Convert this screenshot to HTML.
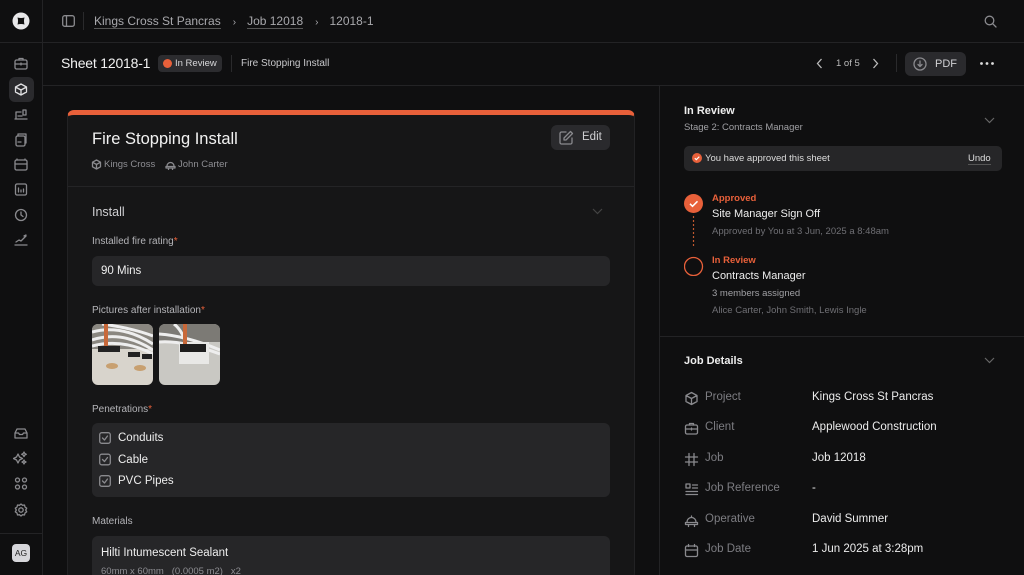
<!DOCTYPE html>
<html style="width:1024px;height:575px;overflow:hidden"><head><meta charset="utf-8"><style>
*{box-sizing:border-box;margin:0;padding:0}
body{width:1024px;height:575px;overflow:hidden;background:#0f0f10;font-family:"Liberation Sans",sans-serif;color:#ececec;position:relative}
.a{position:absolute}
.ic{stroke:#8a8a8e;fill:none;stroke-width:1.3;stroke-linecap:round;stroke-linejoin:round}
.muted{color:#8e8e93}
.lbl{font-size:10px;color:#b4b4b8}
.req{color:#e8603a}
.row{position:absolute;left:684px;font-size:11.5px}
.row .k{position:absolute;left:21px;color:#7d7d82;white-space:nowrap}
.row .v{position:absolute;left:128px;color:#ececec;white-space:nowrap}
.row svg{position:absolute;left:0;top:0}
</style></head><body>
<!-- sidebar -->
<div class="a" style="left:42px;top:0;width:1px;height:575px;background:#232325"></div>
<div class="a" style="left:0;top:42px;width:1024px;height:1px;background:#232325"></div>
<div class="a" style="left:0;top:533px;width:42px;height:1px;background:#232325"></div>
<div class="a" style="left:43px;top:85px;width:981px;height:1px;background:#232325"></div>
<svg class="a" style="left:12px;top:12px" width="18" height="18" viewBox="0 0 18 18"><circle cx="9" cy="9" r="8.5" fill="#e8e8ea"/><path d="M5.5 5.5Q9 6.5 12.5 5.5Q11.5 9 12.5 12.5Q9 11.5 5.5 12.5Q6.5 9 5.5 5.5Z" fill="#111"/></svg>
<div class="a" style="left:9px;top:77px;width:25px;height:25px;border-radius:6px;background:#2a2a2d"></div>
<svg class="a" style="left:13px;top:56px" width="16" height="200" viewBox="0 0 16 200">
<g class="ic">
<rect x="2" y="4" width="12" height="9" rx="1.5"/><path d="M6 4V2.5h4V4M2 8h12M8 7v2"/>
<path d="M8 28l5.5 3v5L8 39l-5.5-3v-5zM2.5 31L8 34l5.5-3M8 34v5" stroke="#e0e0e2"/>
<path d="M2 63h12M3 63v-7h5M10 54h3v5h-3zM5 60h4"/>
<rect x="3" y="80" width="9" height="10" rx="1.5"/><path d="M5 80v-2h8v9h-1M5 86h3"/>
<rect x="2" y="104" width="12" height="10" rx="1.5"/><path d="M2 108h12M4 104v-1M12 104v-1"/>
<rect x="2.5" y="128" width="11" height="11" rx="1.5"/><path d="M5.5 136v-4M8 136v-2M10.5 136v-3"/>
<circle cx="8" cy="159" r="5.5"/><path d="M8 156v3l2 1.5"/>
<path d="M2 189h12M3 186l3-2 2 1 5-5M11 180l2-1"/>
</g></svg>
<svg class="a" style="left:13px;top:427px" width="16" height="92" viewBox="0 0 16 92">
<g class="ic">
<path d="M2 6l2-4h8l2 4v5H2zM2 6h3.5l1 1.5h3L10.5 6H14"/>
<path d="M5 27l1.5 3 3 1.5-3 1.5L5 36l-1.5-3L.5 31.5l3-1.5zM11 25l.8 1.5 1.5.8-1.5.8-.8 1.5-.8-1.5-1.5-.8 1.5-.8zM11 33l.7 1.3 1.3.7-1.3.7-.7 1.3-.7-1.3-1.3-.7 1.3-.7z"/>
<circle cx="4.5" cy="53" r="2"/><circle cx="11.5" cy="53" r="2"/><circle cx="4.5" cy="60" r="2"/><circle cx="11.5" cy="60" r="2"/>
<circle cx="8" cy="83" r="2.2"/><path d="M8 77l1.5 1.3 2-.3.5 2 1.7 1.2-1 1.8 1 1.8-1.7 1.2-.5 2-2-.3L8 89l-1.5-1.3-2 .3-.5-2-1.7-1.2 1-1.8-1-1.8L4 80l.5-2 2 .3z"/>
</g></svg>
<div class="a" style="left:12px;top:544px;width:18px;height:18px;border-radius:4px;background:#d6d6da;color:#222;font-size:8.5px;line-height:18px;text-align:center">AG</div>

<!-- top bar -->
<svg class="a" style="left:62px;top:15px" width="13" height="12" viewBox="0 0 13 12"><g class="ic"><rect x=".7" y=".7" width="11.6" height="10.6" rx="2"/><path d="M4.5 1v10"/></g></svg>
<div class="a" style="left:83px;top:12px;width:1px;height:18px;background:#2a2a2c"></div>
<div class="a" style="left:94px;top:14px;font-size:12px;color:#a9a9ad;white-space:nowrap"><span style="border-bottom:1px solid #555">Kings Cross St Pancras</span><span style="margin:0 11px 0 12px;font-size:10px">›</span><span style="border-bottom:1px solid #555">Job 12018</span><span style="margin:0 11px 0 12px;font-size:10px">›</span>12018-1</div>
<svg class="a" style="left:984px;top:15px" width="13" height="13" viewBox="0 0 13 13"><g class="ic"><circle cx="5.5" cy="5.5" r="4.3"/><path d="M8.7 8.7L12 12"/></g></svg>

<!-- header -->
<div class="a" style="left:61px;top:55px;font-size:14px;color:#f2f2f2;letter-spacing:-0.2px">Sheet 12018-1</div>
<div class="a" style="left:158px;top:55px;width:64px;height:17px;border-radius:4px;background:#2c2c2f;font-size:9.5px;color:#d8d8da;line-height:17px;padding-left:17px">In Review</div>
<div class="a" style="left:163px;top:59px;width:9px;height:9px;border-radius:50%;background:#e8603a"></div>
<div class="a" style="left:231px;top:55px;width:1px;height:17px;background:#2a2a2c"></div>
<div class="a" style="left:241px;top:58px;font-size:10px;color:#c8c8cb">Fire Stopping Install</div>
<svg class="a" style="left:816px;top:58px" width="7" height="11" viewBox="0 0 7 11"><path d="M5.5 1L1.5 5.5 5.5 10" stroke="#bbb" fill="none" stroke-width="1.3"/></svg>
<div class="a" style="left:836px;top:58px;font-size:9.5px;color:#bbb">1 of 5</div>
<svg class="a" style="left:872px;top:58px" width="7" height="11" viewBox="0 0 7 11"><path d="M1.5 1l4 4.5-4 4.5" stroke="#bbb" fill="none" stroke-width="1.3"/></svg>
<div class="a" style="left:896px;top:54px;width:1px;height:18px;background:#2a2a2c"></div>
<div class="a" style="left:905px;top:52px;width:61px;height:24px;border-radius:6px;background:#2a2a2d;font-size:11px;color:#d0d0d3;line-height:24px;padding-left:30px">PDF</div>
<svg class="a" style="left:913px;top:57px" width="14" height="14" viewBox="0 0 14 14"><g class="ic" stroke="#c8c8cb"><circle cx="7" cy="7" r="6"/><path d="M7 4v5M5 7.5l2 2 2-2"/></g></svg>
<svg class="a" style="left:980px;top:62px" width="14" height="3" viewBox="0 0 14 3"><circle cx="1.5" cy="1.5" r="1.4" fill="#ddd"/><circle cx="7" cy="1.5" r="1.4" fill="#ddd"/><circle cx="12.5" cy="1.5" r="1.4" fill="#ddd"/></svg>

<!-- card -->
<div class="a" style="left:67px;top:110px;width:568px;height:470px;border-radius:7px;background:#161617;border:1px solid #222224;border-top:5px solid #e8603a"></div>
<div class="a" style="left:92px;top:130px;font-size:16.5px;color:#f2f2f2">Fire Stopping Install</div>
<div class="a" style="left:551px;top:125px;width:59px;height:25px;border-radius:6px;background:#2a2a2d"></div>
<div class="a" style="left:582px;top:131px;font-size:11.5px;color:#d0d0d3">Edit</div>
<svg class="a" style="left:559px;top:130px" width="15" height="15" viewBox="0 0 15 15"><g class="ic" stroke="#c8c8cb"><path d="M7 2H2.5A1.5 1.5 0 0 0 1 3.5v9A1.5 1.5 0 0 0 2.5 14h9a1.5 1.5 0 0 0 1.5-1.5V8"/><path d="M11.5 1.5l2 2L7 10H5V8z"/></g></svg>
<svg class="a" style="left:91px;top:159px" width="11" height="11" viewBox="0 0 11 11"><path class="ic" d="M5.5 1l4 2.2v4.6l-4 2.2-4-2.2V3.2zM1.5 3.2l4 2.3 4-2.3M5.5 5.5V10"/></svg>
<div class="a muted" style="left:104px;top:159px;font-size:9.5px">Kings Cross</div>
<svg class="a" style="left:165px;top:159px" width="11" height="11" viewBox="0 0 11 11"><path class="ic" d="M2 7a3.5 3.5 0 0 1 7 0M1 7.5h9v1.5H1zM3.5 9.5v1M7.5 9.5v1"/></svg>
<div class="a muted" style="left:178px;top:159px;font-size:9.5px">John Carter</div>
<div class="a" style="left:68px;top:186px;width:566px;height:1px;background:#242426"></div>
<div class="a" style="left:92px;top:205px;font-size:12.5px;color:#cfcfd2">Install</div>
<svg class="a" style="left:592px;top:208px" width="11" height="7" viewBox="0 0 11 7"><path d="M1 1l4.5 4.5L10 1" stroke="#444" fill="none" stroke-width="1.2"/></svg>
<div class="a lbl" style="left:92px;top:236px">Installed fire rating<span class="req">*</span></div>
<div class="a" style="left:92px;top:256px;width:518px;height:30px;border-radius:6px;background:#262628;font-size:11.5px;color:#eee;line-height:30px;padding-left:9px">90 Mins</div>
<div class="a lbl" style="left:92px;top:305px">Pictures after installation<span class="req">*</span></div>
<svg class="a" style="left:92px;top:324px" width="129" height="62" viewBox="0 0 129 62">
<defs><clipPath id="c1"><rect x="0" y="0" width="61" height="61" rx="6"/></clipPath><clipPath id="c2"><rect x="67" y="0" width="61" height="61" rx="6"/></clipPath></defs>
<g clip-path="url(#c1)"><rect width="61" height="61" fill="#d8d4cc"/><rect y="0" width="61" height="25" fill="#8a8780"/><path d="M0 8Q30 0 61 20M0 16Q30 6 61 26M0 22Q30 14 61 30M10 0Q40 4 61 12" stroke="#eee" stroke-width="3" fill="none"/><rect x="12" y="0" width="4" height="24" fill="#c8693a"/><rect x="6" y="22" width="22" height="6" fill="#222"/><rect x="36" y="28" width="12" height="5" fill="#222"/><rect x="50" y="30" width="10" height="5" fill="#222"/><ellipse cx="20" cy="42" rx="6" ry="3" fill="#c8a070"/><ellipse cx="48" cy="44" rx="6" ry="3" fill="#c8a070"/></g>
<g clip-path="url(#c2)"><rect x="67" width="61" height="61" fill="#c9c8c3"/><rect x="67" width="61" height="18" fill="#7c7a75"/><path d="M67 10Q95 12 128 26M82 0Q90 6 94 20M67 18Q90 16 128 30" stroke="#eee" stroke-width="3" fill="none"/><rect x="87" y="18" width="30" height="22" fill="#e8e8e6"/><rect x="88" y="20" width="26" height="8" fill="#1d1d1d"/><rect x="91" y="0" width="4" height="20" fill="#c8693a"/></g>
</svg>
<div class="a lbl" style="left:92px;top:404px">Penetrations<span class="req">*</span></div>
<div class="a" style="left:92px;top:423px;width:518px;height:74px;border-radius:6px;background:#262628"></div>
<svg class="a" style="left:99px;top:432px" width="12" height="56" viewBox="0 0 12 56"><g class="ic" stroke="#b0b0b4"><rect x=".7" y=".7" width="10.6" height="10.6" rx="2"/><path d="M3.5 6l2 2 3-4"/><rect x=".7" y="22.2" width="10.6" height="10.6" rx="2"/><path d="M3.5 27.5l2 2 3-4"/><rect x=".7" y="43.7" width="10.6" height="10.6" rx="2"/><path d="M3.5 49l2 2 3-4"/></g></svg>
<div class="a" style="left:118px;top:428px;font-size:11.5px;color:#eee;line-height:21.5px">Conduits<br>Cable<br>PVC Pipes</div>
<div class="a lbl" style="left:92px;top:516px">Materials</div>
<div class="a" style="left:92px;top:536px;width:518px;height:50px;border-radius:6px;background:#262628"></div>
<div class="a" style="left:101px;top:547px;font-size:11.5px;color:#eee">Hilti Intumescent Sealant</div>
<div class="a muted" style="left:101px;top:566px;font-size:9.5px;white-space:pre">60mm x 60mm   (0.0005 m2)   x2</div>

<!-- right panel -->
<div class="a" style="left:659px;top:86px;width:1px;height:489px;background:#232325"></div>
<div class="a" style="left:660px;top:336px;width:364px;height:1px;background:#232325"></div>
<div class="a" style="left:684px;top:105px;font-size:11px;font-weight:bold;color:#eee">In Review</div>
<div class="a" style="left:684px;top:122px;font-size:9.5px;color:#a0a0a4">Stage 2: Contracts Manager</div>
<svg class="a" style="left:984px;top:117px" width="11" height="7" viewBox="0 0 11 7"><path d="M1 1l4.5 4.5L10 1" stroke="#666" fill="none" stroke-width="1.2"/></svg>
<div class="a" style="left:684px;top:146px;width:318px;height:25px;border-radius:5px;background:#262628"></div>
<svg class="a" style="left:692px;top:153px" width="10" height="10" viewBox="0 0 10 10"><circle cx="5" cy="5" r="5" fill="#e8603a"/><path d="M2.8 5.2l1.5 1.5 3-3" stroke="#fff" fill="none" stroke-width="1.1"/></svg>
<div class="a" style="left:705px;top:153px;font-size:9.5px;color:#ddd">You have approved this sheet</div>
<div class="a" style="left:968px;top:153px;font-size:9.5px;color:#ddd;border-bottom:1px solid #555">Undo</div>
<svg class="a" style="left:684px;top:194px" width="20" height="82" viewBox="0 0 20 82"><circle cx="9.5" cy="9.5" r="9.5" fill="#e8603a"/><path d="M6 9.8l2.5 2.5 5-5" stroke="#fff" fill="none" stroke-width="1.5"/><path d="M9.5 22v32" stroke="#c0582f" stroke-width="1.2" stroke-dasharray="2 2"/><circle cx="9.5" cy="72.5" r="9" fill="none" stroke="#e8603a" stroke-width="1.3"/></svg>
<div class="a" style="left:712px;top:193px;font-size:9.5px;font-weight:bold;color:#e8603a">Approved</div>
<div class="a" style="left:712px;top:208px;font-size:11px;color:#eee">Site Manager Sign Off</div>
<div class="a" style="left:712px;top:226px;font-size:9.5px;color:#6f6f74">Approved by You at 3 Jun, 2025 a 8:48am</div>
<div class="a" style="left:712px;top:255px;font-size:9.5px;font-weight:bold;color:#e8603a">In Review</div>
<div class="a" style="left:712px;top:270px;font-size:11px;color:#eee">Contracts Manager</div>
<div class="a" style="left:712px;top:288px;font-size:9.5px;color:#a0a0a4">3 members assigned</div>
<div class="a" style="left:712px;top:305px;font-size:9.5px;color:#6f6f74">Alice Carter, John Smith, Lewis Ingle</div>

<div class="a" style="left:684px;top:355px;font-size:11px;font-weight:bold;color:#eee">Job Details</div>
<svg class="a" style="left:984px;top:357px" width="11" height="7" viewBox="0 0 11 7"><path d="M1 1l4.5 4.5L10 1" stroke="#666" fill="none" stroke-width="1.2"/></svg>
<div class="row" style="top:391px"><svg width="15" height="15" viewBox="0 0 15 15"><path class="ic" d="M7.5 1.5l5.5 3v6l-5.5 3-5.5-3v-6zM2 4.5l5.5 3 5.5-3M7.5 7.5v6"/></svg><span class="k">Project</span><span class="v">Kings Cross St Pancras</span></div>
<div class="row" style="top:421px"><svg width="15" height="15" viewBox="0 0 15 15"><g class="ic"><rect x="1.5" y="4" width="12" height="9" rx="1.5"/><path d="M5.5 4V2.5h4V4M1.5 8h12M7.5 7v2"/></g></svg><span class="k">Client</span><span class="v">Applewood Construction</span></div>
<div class="row" style="top:452px"><svg width="15" height="15" viewBox="0 0 15 15"><path class="ic" d="M5 1.5v12M10 1.5v12M1.5 5h12M1.5 10h12"/></svg><span class="k">Job</span><span class="v">Job 12018</span></div>
<div class="row" style="top:482px"><svg width="15" height="15" viewBox="0 0 15 15"><path class="ic" d="M2 2h4v4H2zM8.5 3h5M8.5 6h5M2 9.5h11.5M2 12.5h11.5"/></svg><span class="k">Job Reference</span><span class="v">-</span></div>
<div class="row" style="top:513px"><svg width="15" height="15" viewBox="0 0 15 15"><path class="ic" d="M3 9a4.5 4.5 0 0 1 9 0M1.5 9.5h12v2h-12zM4.5 12v1.5M10.5 12v1.5M7.5 4.5V3"/></svg><span class="k">Operative</span><span class="v">David Summer</span></div>
<div class="row" style="top:543px"><svg width="15" height="15" viewBox="0 0 15 15"><g class="ic"><rect x="1.5" y="3" width="12" height="10.5" rx="1.5"/><path d="M1.5 7h12M4.5 1.5v2M10.5 1.5v2"/></g></svg><span class="k">Job Date</span><span class="v">1 Jun 2025 at 3:28pm</span></div>
</body></html>
